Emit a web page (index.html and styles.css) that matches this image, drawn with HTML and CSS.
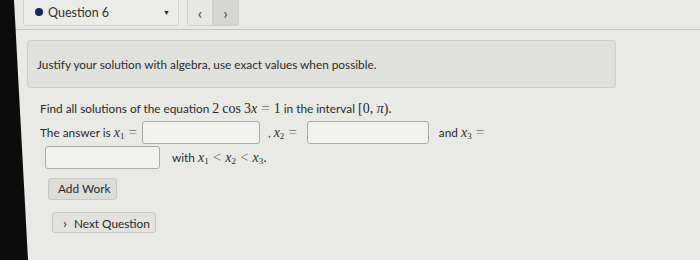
FILE: index.html
```html
<!DOCTYPE html>
<html>
<head>
<meta charset="utf-8">
<link rel="stylesheet" href="styles.css">
</head>
<body>
<div class="edge"></div>
<div class="page">
  <div class="topbar">
    <div class="qselect">
      <span class="dot"></span>
      <span class="qlabel">Question 6</span>
      <span class="caret">▼</span>
    </div>
    <div class="nav">
      <div class="navbtn">‹</div>
      <div class="navbtn dark">›</div>
    </div>
  </div>
  <div class="instructions">Justify your solution with algebra, use exact values when possible.</div>
  <div class="question">
    <div class="line1">Find all solutions of the equation <span class="m">2</span> <span class="mr">cos</span> <span class="m">3<i>x</i></span> <span class="m op">=</span> <span class="m">1</span> in the interval <span class="m">[0, <i>π</i>).</span></div>
    <div class="line2">
      <span class="lbl">The answer is <span class="m"><i>x</i><sub>1</sub></span> <span class="m op">=</span></span>
      <span class="inp w1"></span>
      <span class="lbl mid">, <span class="m"><i>x</i><sub>2</sub></span> <span class="m op">=</span></span>
      <span class="inp w2"></span>
      <span class="lbl end">and <span class="m"><i>x</i><sub>3</sub></span> <span class="m op">=</span></span>
    </div>
    <div class="line3">
      <span class="inp w3"></span>
      <span class="lbl">with <span class="m"><i>x</i><sub>1</sub></span> <span class="m op">&lt;</span> <span class="m"><i>x</i><sub>2</sub></span> <span class="m op">&lt;</span> <span class="m"><i>x</i><sub>3</sub>.</span></span>
    </div>
  </div>
  <div class="btnrow"><span class="btn">Add Work</span></div>
  <div class="btnrow next"><span class="btn"><span class="chev">›</span> Next Question</span></div>
</div>
<div class="wedge"></div>
</body>
</html>
```
FILE: styles.css
```css
html, body {
  margin: 0;
  padding: 0;
}
body {
  width: 700px;
  height: 260px;
  overflow: hidden;
  background: #e9e9e6;
  display: flex;
  font-family: Lato, "Liberation Sans", sans-serif;
  font-size: 11.8px;
  color: #2a2a2a;
  position: relative;
}
.edge {
  width: 14px;
  flex: none;
  background: #0c0c0c;
}
.wedge {
  position: absolute;
  left: 13px;
  top: 0;
  width: 16px;
  height: 260px;
  background: #0c0c0c;
  clip-path: polygon(0 0, 1px 0, 15px 100%, 0 100%);
}
.page {
  flex: 1;
  display: flex;
  flex-direction: column;
}
.topbar {
  height: 30px;
  border-bottom: 1px solid #c4c4c2;
  display: flex;
  align-items: flex-start;
  box-sizing: border-box;
}
.qselect {
  margin-left: 9px;
  margin-top: -2px;
  width: 156px;
  height: 28px;
  box-sizing: border-box;
  border: 1px solid #d2d2cf;
  border-radius: 3px;
  background: #ebebe8;
  display: flex;
  align-items: center;
  padding-left: 11px;
}
.dot {
  width: 8px;
  height: 8px;
  border-radius: 50%;
  background: #1b1f7a;
  margin-right: 5px;
}
.qlabel {
  font-size: 12.5px;
  color: #333;
  flex: 1;
}
.caret {
  font-size: 7px;
  color: #222;
  margin-right: 8px;
}
.nav {
  display: flex;
  margin-left: 8px;
  margin-top: -2px;
}
.navbtn {
  width: 26px;
  height: 28px;
  box-sizing: border-box;
  border: 1px solid #d0d0cd;
  background: #e7e7e4;
  display: flex;
  align-items: center;
  justify-content: center;
  font-size: 16px;
  color: #444;
  border-radius: 3px 0 0 3px;
}
.navbtn.dark {
  background: #d6d6d3;
  border-radius: 0 3px 3px 0;
  border-left: none;
}
.instructions {
  margin: 10px 84px 0 13px;
  height: 48px;
  box-sizing: border-box;
  border: 1px solid #cfcfcc;
  border-radius: 3px;
  background: #e0e0dd;
  padding: 0 9px;
  display: flex;
  align-items: center;
  color: #2b2b2b;
}
.question {
  margin-top: 12px;
  padding-left: 26px;
}
.m {
  font-family: "Liberation Serif", "DejaVu Serif", serif;
  font-size: 14px;
}
.mr {
  font-family: "Liberation Serif", "DejaVu Serif", serif;
  font-size: 14px;
}
.m i {
  font-style: italic;
}
.m sub {
  font-size: 9px;
  vertical-align: -2px;
  font-style: normal;
}
.op {
  color: #6f6f6f;
  font-size: 15px;
  margin: 0 1px;
}
.line1 {
  height: 17px;
  line-height: 17px;
}
.line2 {
  display: flex;
  align-items: center;
  height: 25px;
  margin-top: 3px;
}
.lbl {
  white-space: nowrap;
}
.lbl.mid {
  margin-left: 8px;
  margin-right: 5px;
}
.lbl.end {
  margin-left: 10px;
}
.inp {
  display: inline-block;
  height: 23px;
  box-sizing: border-box;
  border: 1px solid #a9a9a6;
  border-radius: 3px;
  background: #f1f1ee;
  margin-left: 4px;
}
.w1 { width: 118px; }
.w2 { width: 122px; }
.w3 { width: 115px; margin-left: 5px; margin-right: 12px; }
.line3 {
  display: flex;
  align-items: center;
  height: 24px;
  margin-top: 0;
}
.btnrow {
  margin-top: 9px;
  padding-left: 34px;
  display: flex;
}
.btnrow.next {
  margin-top: 12px;
  padding-left: 38px;
}
.btn {
  display: inline-block;
  height: 22px;
  line-height: 20px;
  box-sizing: border-box;
  border: 1px solid #c8c8c5;
  border-radius: 3px;
  background: #dcdcd9;
  padding: 0 6px 0 9px;
  color: #2a2a2a;
}
.next .btn {
  height: 21px;
  background: #e2e2df;
  padding: 0 5px 0 10px;
}
.chev {
  font-size: 14px;
  margin-right: 4px;
}
```
